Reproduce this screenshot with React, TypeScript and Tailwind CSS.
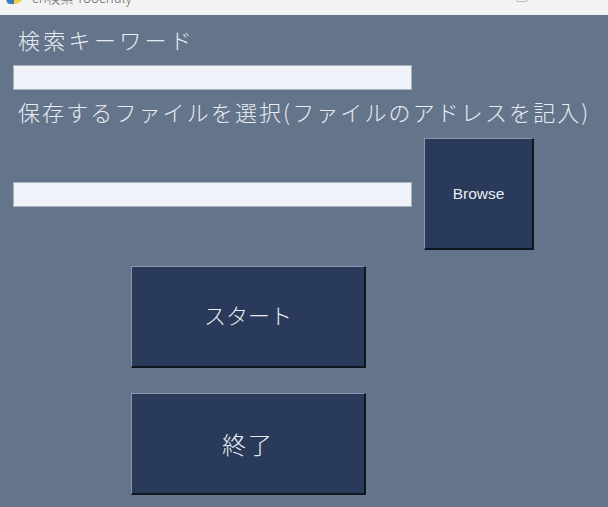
const jp = "font-['Noto_Sans_CJK_JP','Noto_Sans',sans-serif] font-light";

function ActionButton({ label, className }: { label: string; className: string }) {
  return (
    <button
      className={`flex items-center justify-center bg-[#293a5a] border-t border-l border-t-[#8796ad] border-l-[#8796ad] border-r-2 border-b-2 border-r-[#10161f] border-b-[#10161f] text-[#e8ecf2] ${className}`}
    >
      {label}
    </button>
  );
}

export default function App() {
  return (
    <div className="w-[608px] h-[507px] overflow-hidden bg-[#64748b] flex flex-col">
      {/* title bar, top of it is cut off in the shot */}
      <div className="h-[15px] shrink-0 bg-[#f3f3f3] flex items-start justify-between overflow-hidden">
        <div className="flex items-start gap-[9px] pl-[5px] -mt-[11px]">
          <svg width="18" height="16" viewBox="0 0 18 16" className="shrink-0">
            <path d="M1 8 Q1 1 9 1 L9 15 L5 15 Q1 15 1 8Z" fill="#3b7bb8" />
            <path d="M17 8 Q17 15 9 15 L9 1 L13 1 Q17 1 17 8Z" fill="#f5cf4a" />
          </svg>
          <span className={`${jp} text-[13.5px] leading-[16px] text-[#666] whitespace-nowrap`}>cn検索 Yoochuly</span>
        </div>
        <div className="flex items-start pr-[21px] -mt-[11px]">
          <div className="w-[12px] h-[13px] border border-[#bbb] rounded-[2px]" />
          <span className="ml-[47px] text-[14px] leading-[14px] text-[#555] font-['Liberation_Sans',sans-serif]">✕</span>
        </div>
      </div>

      <div className={`${jp} flex-1 pl-[13px] text-[#e8ecf2]`}>
        <div className="pl-[5px] text-[22px] leading-[30px] mt-[9px] tracking-[3.3px] whitespace-nowrap">検索キーワード</div>
        <input className="block mt-[11px] w-[399px] h-[25px] bg-[#eff3f9] border border-[#a9b2bf]" />
        <div className="pl-[5px] text-[22px] leading-[30px] mt-[6px] whitespace-nowrap tracking-[2.1px]">
          保存するファイルを選択(ファイルのアドレスを記入)
        </div>
        <div className="flex items-center mt-[12px]">
          <input className="block w-[399px] h-[25px] bg-[#eff3f9] border border-[#a9b2bf]" />
          <ActionButton
            label="Browse"
            className="ml-[12px] w-[110px] h-[112px] text-[15.5px] pt-[1px] font-['Liberation_Sans',sans-serif] font-normal"
          />
        </div>
        <div className="flex flex-col gap-[25px] mt-[16px] ml-[118px]">
          <ActionButton label="スタート" className="w-[235px] h-[102px] text-[22px] pb-[4px]" />
          <ActionButton label="終了" className="w-[235px] h-[102px] text-[24px] tracking-[2px]" />
        </div>
      </div>
    </div>
  );
}
